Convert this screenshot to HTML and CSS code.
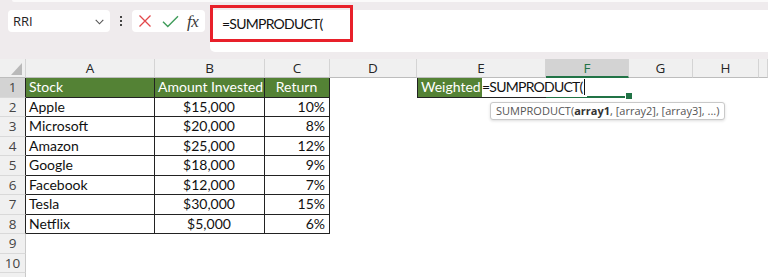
FILE: index.html
```html
<!DOCTYPE html>
<html>
<head>
<meta charset="utf-8">
<link rel="stylesheet" href="styles.css">
</head>
<body>
<div class="topband"><div class="ribbon-edge"></div></div>
<div class="fbar">
  <div class="namebox">
    <span class="nb-text">RRI</span>
    <svg class="chev" width="9" height="6" viewBox="0 0 9 6"><path d="M0.7 0.8 L4.5 4.8 L8.3 0.8" fill="none" stroke="#555" stroke-width="1.1"/></svg>
  </div>
  <div class="dots"><i></i><i></i><i></i></div>
  <div class="btns">
    <svg class="ic-x" width="14" height="14" viewBox="0 0 14 14"><path d="M1.5 1.5 L12.5 12.5 M12.5 1.5 L1.5 12.5" stroke="#e2474b" stroke-width="1.3" fill="none"/></svg>
    <svg class="ic-ok" width="17" height="13" viewBox="0 0 17 13"><path d="M1 6.8 L5.8 11.6 L16 1.2" stroke="#3f9c5a" stroke-width="1.4" fill="none"/></svg>
    <span class="fx">fx</span>
  </div>
  <div class="finput">
    <span class="ftext">=SUMPRODUCT(</span>
    <div class="redbox"></div>
  </div>
</div>
<div class="gap"></div>
<div class="sheet">
  <div class="corner"><span class="tri"></span></div>
  <div class="ch">A</div>
  <div class="ch">B</div>
  <div class="ch">C</div>
  <div class="ch">D</div>
  <div class="ch">E</div>
  <div class="ch act">F</div>
  <div class="ch">G</div>
  <div class="ch">H</div>
  <div class="ch"></div>

  <div class="rh tb act">1</div>
  <div class="c t hd">Stock</div>
  <div class="c t hd ctr">Amount Invested</div>
  <div class="c t hd ctr">Return</div>
  <div class="c"></div>
  <div class="c e1"><span class="wt">Weighted</span><span class="edit">=SUMPRODUCT(<i class="caret"></i></span></div>
  <div class="c f1"></div>

  <div class="rh tb">2</div><div class="c t">Apple</div><div class="c t ctr">$15,000</div><div class="c t num">10%</div>
  <div class="rh tb">3</div><div class="c t">Microsoft</div><div class="c t ctr">$20,000</div><div class="c t num">8%</div>
  <div class="rh tb">4</div><div class="c t">Amazon</div><div class="c t ctr">$25,000</div><div class="c t num">12%</div>
  <div class="rh tb">5</div><div class="c t">Google</div><div class="c t ctr">$18,000</div><div class="c t num">9%</div>
  <div class="rh tb">6</div><div class="c t">Facebook</div><div class="c t ctr">$12,000</div><div class="c t num">7%</div>
  <div class="rh tb">7</div><div class="c t">Tesla</div><div class="c t ctr">$30,000</div><div class="c t num">15%</div>
  <div class="rh tb">8</div><div class="c t">Netflix</div><div class="c t ctr">$5,000</div><div class="c t num">6%</div>
  <div class="rh">9</div>
  <div class="rh">10</div>
  <div class="rh"></div>
</div>
<div class="tip">SUMPRODUCT(<b>array1</b>, [array2], [array3], ...)</div>
</body>
</html>
```

FILE: styles.css
```css
* { box-sizing: border-box; }
html, body { margin: 0; padding: 0; }
body {
  width: 768px;
  height: 277px;
  overflow: hidden;
  background: #efebed;
  font-family: "Open Sans", "Liberation Sans", sans-serif;
  position: relative;
}
.topband { height: 10px; }
.ribbon-edge {
  height: 2px;
  margin-left: 12px;
  background: #fbfafa;
  border-bottom-left-radius: 3px;
}
.fbar {
  display: flex;
  align-items: flex-start;
  height: 42px;
  padding-left: 8px;
}
.namebox {
  width: 102px;
  height: 22px;
  background: #fff;
  border-radius: 4px;
  display: flex;
  align-items: center;
  justify-content: space-between;
  padding: 0 6px 0 5px;
}
.nb-text { font-size: 13px; color: #222; }
.chev { margin-top: 1px; }
.dots {
  width: 22px;
  height: 22px;
  display: flex;
  flex-direction: column;
  align-items: center;
  justify-content: center;
  gap: 2px;
}
.dots i { display: block; width: 2px; height: 2px; background: #444; }
.btns {
  width: 73px;
  height: 22px;
  background: #fff;
  border-radius: 4px;
  display: flex;
  align-items: center;
  padding-left: 6px;
}
.ic-x { margin-right: 10px; }
.ic-ok { margin-right: 8px; }
.fx {
  font-family: "Liberation Serif", serif;
  font-style: italic;
  font-size: 17px;
  color: #3a3a3a;
  letter-spacing: -0.5px;
  line-height: 1;
}
.finput {
  flex: 1;
  height: 42px;
  margin-left: 5px;
  background: #fff;
  border-radius: 5px 0 0 5px;
  position: relative;
  padding: 2px 0 0 12px;
}
.ftext {
  font-family: Lato, sans-serif;
  font-size: 14px;
  letter-spacing: -0.75px;
  color: #111;
  line-height: 18px;
}
.redbox {
  position: absolute;
  left: 0;
  top: -5px;
  width: 143px;
  height: 37px;
  border: 3px solid #e8202a;
}
.gap { height: 7px; }
.sheet {
  display: grid;
  grid-template-columns: 26px 129px 110px 65px 87px 129px 83px 64px 66px 1fr;
  grid-template-rows: 19px;
  grid-auto-rows: 19.5px;
  background: #fff;
  height: 218px;
  overflow: hidden;
}
.corner {
  background: #f0f0f0;
  border-right: 1px solid #d4d4d4;
  border-bottom: 1px solid #bdbdbd;
  position: relative;
}
.tri {
  position: absolute;
  right: 3px;
  bottom: 2px;
  width: 0;
  height: 0;
  border-left: 11px solid transparent;
  border-bottom: 12px solid #b9b9b9;
}
.ch {
  background: #f0f0f0;
  border-right: 1px solid #d4d4d4;
  border-bottom: 1px solid #bdbdbd;
  text-align: center;
  font-size: 13.5px;
  color: #262626;
  line-height: 18px;
}
.ch.act {
  background: #d3d3d3;
  color: #217346;
  border-bottom: 2px solid #217346;
}
.rh {
  grid-column: 1;
  background: #f0f0f0;
  border-right: 1px solid #c9c9c9;
  border-bottom: 1px solid #d9d9d9;
  text-align: center;
  font-size: 13.5px;
  color: #444;
  line-height: 18.5px;
}
.rh.tb { border-right-color: #222; }
.rh.act { background: #d3d3d3; }
.c {
  font-family: Lato, sans-serif;
  font-size: 14px;
  color: #111;
  line-height: 18px;
  padding: 0 4px 0 3px;
  white-space: nowrap;
  overflow: hidden;
}
.c.t {
  border-right: 1px solid #222;
  border-bottom: 1px solid #222;
}
.c.hd { background: #548235; color: #fff; }
.ctr { text-align: center; }
.num { text-align: right; }
.c.e1 {
  overflow: visible;
  display: flex;
  padding: 0;
  border-left: 1px solid #222;
  border-bottom: 1px solid #222;
  position: relative;
  z-index: 2;
}
.wt {
  flex: none;
  width: 64px;
  overflow: hidden;
  background: #548235;
  color: #fff;
  padding-left: 3px;
}
.edit {
  flex: none;
  background: #fff;
  color: #111;
  letter-spacing: -0.75px;
  padding-right: 2px;
  position: relative;
}
.caret {
  display: inline-block;
  width: 1px;
  height: 16px;
  background: #111;
  vertical-align: -3px;
  margin-left: 1px;
}
.c.f1 {
  border-bottom: 2px solid #217346;
  overflow: visible;
  position: relative;
}
.c.f1::after {
  content: "";
  position: absolute;
  right: -4px;
  bottom: -4px;
  width: 6px;
  height: 6px;
  background: #217346;
  border: 1px solid #fff;
}
.tip {
  position: absolute;
  left: 490px;
  top: 102px;
  width: 235px;
  height: 18px;
  background: #fff;
  border: 1px solid #c9c9c9;
  border-radius: 3px;
  box-shadow: 0 1px 3px rgba(0,0,0,0.14);
  font-size: 11px;
  line-height: 16px;
  color: #555;
  padding-left: 5px;
  white-space: nowrap;
  z-index: 5;
}
.tip b { color: #333; }
```
